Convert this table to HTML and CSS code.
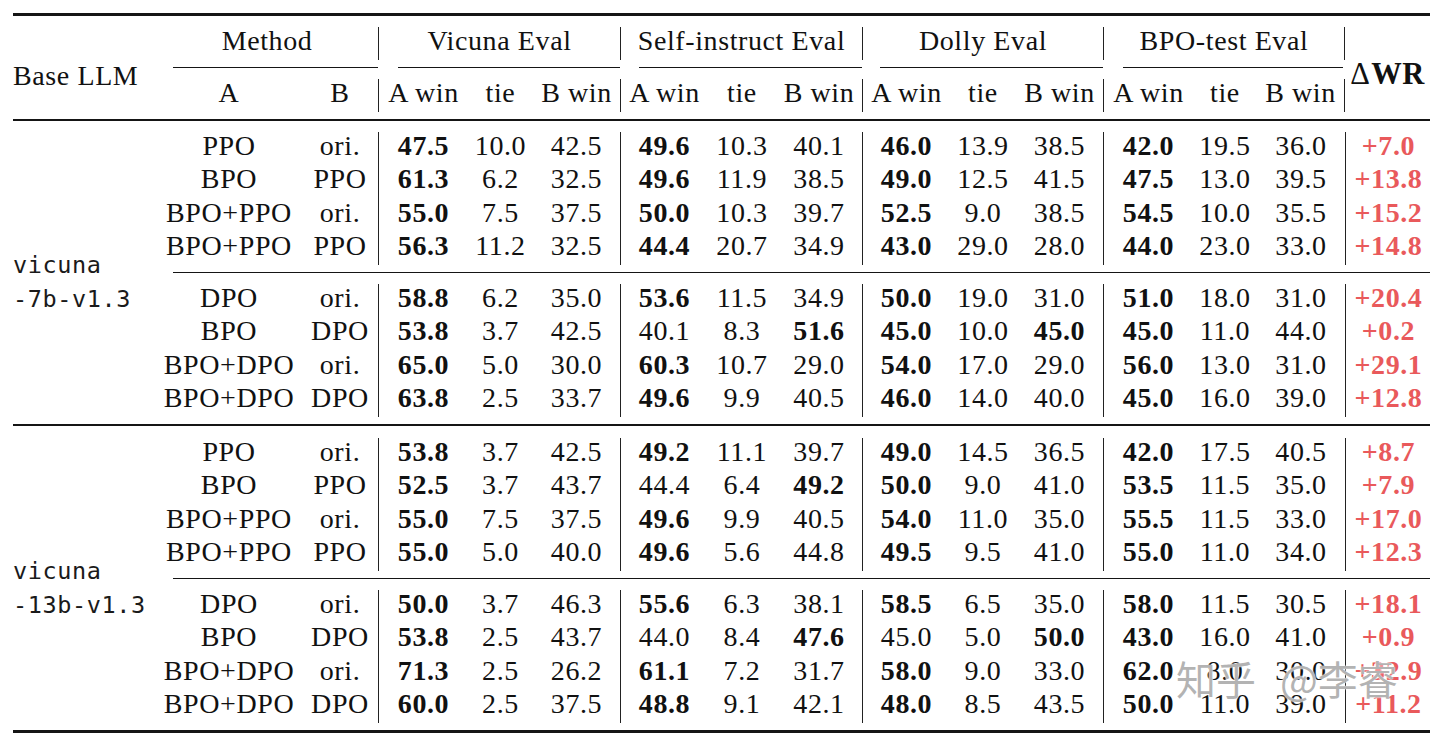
FILE: index.html
```html
<!DOCTYPE html>
<html lang="en">
<head>
<meta charset="utf-8">
<title>BPO results table</title>
<link rel="stylesheet" href="styles.css">
</head>
<body>
<div class="page">
  <div class="table">
    <div class="rule rule-top"></div>

    <div class="head">
      <div class="h-base">Base LLM</div>
      <div class="h-dwr"><span class="delta">Δ</span>WR</div>

      <div class="h1 span2">Method</div>
      <div class="h1 span3 sep">Vicuna Eval</div>
      <div class="h1 span3 sep">Self-instruct Eval</div>
      <div class="h1 span3 sep">Dolly Eval</div>
      <div class="h1 span3 sep sep-r">BPO-test Eval</div>

      <div class="cm span2 cm-method"></div>
      <div class="cm span3 cm-vicuna"></div>
      <div class="cm span3 cm-self"></div>
      <div class="cm span3 cm-dolly"></div>
      <div class="cm span3 cm-bpo"></div>

      <div class="h2">A</div>
      <div class="h2">B</div>
      <div class="h2 sep">A win</div><div class="h2">tie</div><div class="h2">B win</div>
      <div class="h2 sep">A win</div><div class="h2">tie</div><div class="h2">B win</div>
      <div class="h2 sep">A win</div><div class="h2">tie</div><div class="h2">B win</div>
      <div class="h2 sep">A win</div><div class="h2">tie</div><div class="h2 sep-r">B win</div>
    </div>

    <div class="rule rule-mid rule-mid-first"></div>

    <section class="group">
      <div class="llm">vicuna<br>-7b-v1.3</div>
      <div class="blocks">
        <div class="block">
          <div class="row"><span>PPO</span><span>ori.</span><b class="sep">47.5</b><span>10.0</span><span>42.5</span><b class="sep">49.6</b><span>10.3</span><span>40.1</span><b class="sep">46.0</b><span>13.9</span><span>38.5</span><b class="sep">42.0</b><span>19.5</span><span>36.0</span><b class="sep wr">+7.0</b></div>
          <div class="row"><span>BPO</span><span>PPO</span><b class="sep">61.3</b><span>6.2</span><span>32.5</span><b class="sep">49.6</b><span>11.9</span><span>38.5</span><b class="sep">49.0</b><span>12.5</span><span>41.5</span><b class="sep">47.5</b><span>13.0</span><span>39.5</span><b class="sep wr">+13.8</b></div>
          <div class="row"><span>BPO+PPO</span><span>ori.</span><b class="sep">55.0</b><span>7.5</span><span>37.5</span><b class="sep">50.0</b><span>10.3</span><span>39.7</span><b class="sep">52.5</b><span>9.0</span><span>38.5</span><b class="sep">54.5</b><span>10.0</span><span>35.5</span><b class="sep wr">+15.2</b></div>
          <div class="row"><span>BPO+PPO</span><span>PPO</span><b class="sep">56.3</b><span>11.2</span><span>32.5</span><b class="sep">44.4</b><span>20.7</span><span>34.9</span><b class="sep">43.0</b><span>29.0</span><span>28.0</span><b class="sep">44.0</b><span>23.0</span><span>33.0</span><b class="sep wr">+14.8</b></div>
        </div>
        <div class="rule rule-cm"></div>
        <div class="block">
          <div class="row"><span>DPO</span><span>ori.</span><b class="sep">58.8</b><span>6.2</span><span>35.0</span><b class="sep">53.6</b><span>11.5</span><span>34.9</span><b class="sep">50.0</b><span>19.0</span><span>31.0</span><b class="sep">51.0</b><span>18.0</span><span>31.0</span><b class="sep wr">+20.4</b></div>
          <div class="row"><span>BPO</span><span>DPO</span><b class="sep">53.8</b><span>3.7</span><span>42.5</span><span class="sep">40.1</span><span>8.3</span><b>51.6</b><b class="sep">45.0</b><span>10.0</span><b>45.0</b><b class="sep">45.0</b><span>11.0</span><span>44.0</span><b class="sep wr">+0.2</b></div>
          <div class="row"><span>BPO+DPO</span><span>ori.</span><b class="sep">65.0</b><span>5.0</span><span>30.0</span><b class="sep">60.3</b><span>10.7</span><span>29.0</span><b class="sep">54.0</b><span>17.0</span><span>29.0</span><b class="sep">56.0</b><span>13.0</span><span>31.0</span><b class="sep wr">+29.1</b></div>
          <div class="row"><span>BPO+DPO</span><span>DPO</span><b class="sep">63.8</b><span>2.5</span><span>33.7</span><b class="sep">49.6</b><span>9.9</span><span>40.5</span><b class="sep">46.0</b><span>14.0</span><span>40.0</span><b class="sep">45.0</b><span>16.0</span><span>39.0</span><b class="sep wr">+12.8</b></div>
        </div>
      </div>
    </section>

    <div class="rule rule-mid"></div>

    <section class="group">
      <div class="llm">vicuna<br>-13b-v1.3</div>
      <div class="blocks">
        <div class="block">
          <div class="row"><span>PPO</span><span>ori.</span><b class="sep">53.8</b><span>3.7</span><span>42.5</span><b class="sep">49.2</b><span>11.1</span><span>39.7</span><b class="sep">49.0</b><span>14.5</span><span>36.5</span><b class="sep">42.0</b><span>17.5</span><span>40.5</span><b class="sep wr">+8.7</b></div>
          <div class="row"><span>BPO</span><span>PPO</span><b class="sep">52.5</b><span>3.7</span><span>43.7</span><span class="sep">44.4</span><span>6.4</span><b>49.2</b><b class="sep">50.0</b><span>9.0</span><span>41.0</span><b class="sep">53.5</b><span>11.5</span><span>35.0</span><b class="sep wr">+7.9</b></div>
          <div class="row"><span>BPO+PPO</span><span>ori.</span><b class="sep">55.0</b><span>7.5</span><span>37.5</span><b class="sep">49.6</b><span>9.9</span><span>40.5</span><b class="sep">54.0</b><span>11.0</span><span>35.0</span><b class="sep">55.5</b><span>11.5</span><span>33.0</span><b class="sep wr">+17.0</b></div>
          <div class="row"><span>BPO+PPO</span><span>PPO</span><b class="sep">55.0</b><span>5.0</span><span>40.0</span><b class="sep">49.6</b><span>5.6</span><span>44.8</span><b class="sep">49.5</b><span>9.5</span><span>41.0</span><b class="sep">55.0</b><span>11.0</span><span>34.0</span><b class="sep wr">+12.3</b></div>
        </div>
        <div class="rule rule-cm"></div>
        <div class="block">
          <div class="row"><span>DPO</span><span>ori.</span><b class="sep">50.0</b><span>3.7</span><span>46.3</span><b class="sep">55.6</b><span>6.3</span><span>38.1</span><b class="sep">58.5</b><span>6.5</span><span>35.0</span><b class="sep">58.0</b><span>11.5</span><span>30.5</span><b class="sep wr">+18.1</b></div>
          <div class="row"><span>BPO</span><span>DPO</span><b class="sep">53.8</b><span>2.5</span><span>43.7</span><span class="sep">44.0</span><span>8.4</span><b>47.6</b><span class="sep">45.0</span><span>5.0</span><b>50.0</b><b class="sep">43.0</b><span>16.0</span><span>41.0</span><b class="sep wr">+0.9</b></div>
          <div class="row"><span>BPO+DPO</span><span>ori.</span><b class="sep">71.3</b><span>2.5</span><span>26.2</span><b class="sep">61.1</b><span>7.2</span><span>31.7</span><b class="sep">58.0</b><span>9.0</span><span>33.0</span><b class="sep">62.0</b><span>8.0</span><span>30.0</span><b class="sep wr">+32.9</b></div>
          <div class="row"><span>BPO+DPO</span><span>DPO</span><b class="sep">60.0</b><span>2.5</span><span>37.5</span><b class="sep">48.8</b><span>9.1</span><span>42.1</span><b class="sep">48.0</b><span>8.5</span><span>43.5</span><b class="sep">50.0</b><span>11.0</span><span>39.0</span><b class="sep wr">+11.2</b></div>
        </div>
      </div>
    </section>

    <div class="rule rule-bottom"></div>
  </div>

  <div class="watermark">知乎 @李睿</div>
</div>
</body>
</html>
```

FILE: styles.css
```css
* {
  box-sizing: border-box;
}

html,
body {
  margin: 0;
  padding: 0;
  background: #ffffff;
}

body {
  font-family: "Liberation Serif", "Times New Roman", serif;
  font-size: 28px;
  letter-spacing: 0.6px;
  color: #111111;
}

.page {
  position: relative;
  width: 1440px;
  height: 742px;
  padding: 13px 0 0 13px;
  overflow: hidden;
}

.table {
  width: 1417px;
}

/* booktabs-like rules */
.rule {
  background: #151515;
}

.rule-top {
  height: 3px;
}

.rule-mid {
  height: 2px;
  margin: 7px 0 12px;
}

.rule-mid-first {
  margin: 6.5px 0 11.5px;
}

.rule-cm {
  height: 1px;
  margin: 7px 0 11px 17px;
}

.rule-bottom {
  height: 3px;
  margin-top: 7px;
}

/* header */
.head {
  display: grid;
  grid-template-columns: 143px 146px 76px 90px 65px 87px 88px 68px 86px 88px 66px 87px 90px 64px 88px 85px;
  grid-template-rows: 33px 6.5px 1px 11.5px 33px;
  margin-top: 11px;
  line-height: 27.7px;
  white-space: nowrap;
}

.h-base {
  grid-column: 1;
  grid-row: 1 / 6;
  padding-top: 34.7px;
  text-align: left;
}

.h-dwr {
  grid-column: 16;
  grid-row: 1 / 6;
  padding-top: 33.7px;
  text-align: center;
  font-size: 30.5px;
  font-weight: bold;
  letter-spacing: 0.4px;
}

.delta {
  font-weight: normal;
  margin-right: 1px;
}

.h1 {
  grid-row: 1;
  text-align: center;
}

.h2 {
  grid-row: 5;
  text-align: center;
}

.span2 {
  grid-column: span 2;
}

.span3 {
  grid-column: span 3;
}

.cm {
  grid-row: 3;
  background: #151515;
}

.cm-method {
  margin-left: 17px;
}

.cm-vicuna {
  margin-left: 20px;
}

.cm-self {
  margin-left: 19px;
}

.cm-dolly {
  margin-left: 18px;
}

.cm-bpo {
  margin-left: 20px;
  margin-right: 2px;
}

.sep {
  border-left: 1px solid #222222;
}

.sep-r {
  border-right: 1px solid #222222;
}

/* body groups */
.group {
  display: flex;
}

.llm {
  flex: 0 0 143px;
  padding-top: 116.2px;
  font-family: "DejaVu Sans Mono", "Liberation Mono", monospace;
  font-size: 23.5px;
  letter-spacing: 0.6px;
  line-height: 34px;
  color: #1a1a1a;
}

.blocks {
  flex: 0 0 1274px;
}

.row {
  display: grid;
  grid-template-columns: 146px 76px 90px 65px 87px 88px 68px 86px 88px 66px 87px 90px 64px 88px 85px;
  height: 33.25px;
  line-height: 27.7px;
  white-space: nowrap;
}

.row > span,
.row > b {
  text-align: center;
}

.row > b {
  font-weight: bold;
}

.wr {
  color: #e9595b;
  padding-left: 1px;
}

/* watermark overlay */
.watermark {
  position: absolute;
  left: 1176px;
  top: 658px;
  font-family: "Noto Sans CJK SC", sans-serif;
  font-size: 40px;
  line-height: 40px;
  letter-spacing: 0;
  word-spacing: 15px;
  color: rgba(150, 150, 150, 0.72);
  text-shadow: 0 0 2px #ffffff, 0 0 1px #ffffff;
  white-space: nowrap;
}
```
